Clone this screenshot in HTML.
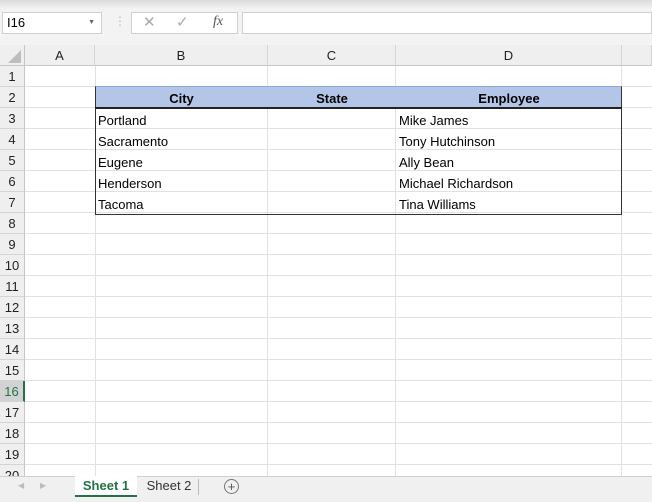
<!DOCTYPE html>
<html><head><style>
*{margin:0;padding:0;box-sizing:border-box}
body{width:652px;height:502px;overflow:hidden;background:#fff;font-family:"Liberation Sans",sans-serif;position:relative;font-size:13px;color:#000}
.a{position:absolute}
.vl{position:absolute;top:66px;height:410px;width:1px;background:#e1e1e1}
.hl{position:absolute;left:25px;width:627px;height:1px;background:#e1e1e1}
.rh{position:absolute;left:0;width:25px;height:21px;background:#efefef;border-bottom:1px solid #d4d4d4;border-right:1px solid #c6c6c6;text-align:center;line-height:21px;font-size:13px;color:#222}
.ch{position:absolute;top:45px;height:21px;background:#efefef;border-right:1px solid #d4d4d4;border-bottom:1px solid #c6c6c6;text-align:center;line-height:21px;color:#222}
.t{position:absolute;line-height:21px;font-size:13px}
</style></head><body>
<div class="a" style="left:0;top:0;width:652px;height:45px;background:#f3f3f3"></div>
<div class="a" style="left:0;top:0;width:652px;height:8px;background:linear-gradient(#dcdcdc,#f0f0f0)"></div>
<div class="a" style="left:2px;top:12px;width:100px;height:22px;background:#fff;border:1px solid #d0d0d0;font-size:13px;line-height:20px;padding-left:4px">I16<span style="position:absolute;right:6px;top:0;font-size:7px;color:#666">▼</span></div>
<div class="a" style="left:114px;top:14px;color:#bbb;font-size:12px">⋮</div>
<div class="a" style="left:131px;top:12px;width:107px;height:22px;background:#fff;border:1px solid #d0d0d0"></div>
<div class="a" style="left:143px;top:13px;color:#aaa;font-size:15px">✕</div>
<div class="a" style="left:176px;top:13px;color:#aaa;font-size:15px">✓</div>
<div class="a" style="left:213px;top:14px;color:#555;font-family:'Liberation Serif',serif;font-style:italic;font-size:14px">fx</div>
<div class="a" style="left:242px;top:12px;width:410px;height:22px;background:#fff;border:1px solid #d0d0d0"></div>
<div class="a" style="left:0;top:45px;width:25px;height:21px;background:#efefef;border-right:1px solid #c6c6c6;border-bottom:1px solid #c6c6c6"></div>
<div class="a" style="left:8px;top:50px;width:0;height:0;border-left:13px solid transparent;border-bottom:13px solid #bdbdbd"></div>
<div class="ch" style="left:25px;width:70px">A</div>
<div class="ch" style="left:95px;width:173px">B</div>
<div class="ch" style="left:268px;width:128px">C</div>
<div class="ch" style="left:396px;width:226px">D</div>
<div class="ch" style="left:622px;width:30px"></div>
<div class="vl" style="left:95px"></div><div class="vl" style="left:267px"></div><div class="vl" style="left:395px"></div><div class="vl" style="left:621px"></div>
<div id="rows"></div>
<div class="a" style="left:96px;top:87px;width:526px;height:21px;background:#b4c6e7"></div>
<div class="a" style="left:95px;top:86px;width:527px;height:129px;border:1px solid #333;border-top:1px solid #8ea9db"></div>
<div class="a" style="left:95px;top:107px;width:527px;height:2px;background:#222"></div>
<div class="t" style="left:95px;top:88px;width:173px;text-align:center;font-weight:bold">City</div>
<div class="t" style="left:268px;top:88px;width:128px;text-align:center;font-weight:bold">State</div>
<div class="t" style="left:396px;top:88px;width:226px;text-align:center;font-weight:bold">Employee</div>
<div class="t" style="left:98px;top:110px">Portland</div><div class="t" style="left:399px;top:110px">Mike James</div>
<div class="t" style="left:98px;top:131px">Sacramento</div><div class="t" style="left:399px;top:131px">Tony Hutchinson</div>
<div class="t" style="left:98px;top:152px">Eugene</div><div class="t" style="left:399px;top:152px">Ally Bean</div>
<div class="t" style="left:98px;top:173px">Henderson</div><div class="t" style="left:399px;top:173px">Michael Richardson</div>
<div class="t" style="left:98px;top:194px">Tacoma</div><div class="t" style="left:399px;top:194px">Tina Williams</div>
<div class="a" style="left:0;top:476px;width:652px;height:26px;background:#f0f0f0;border-top:1px solid #d0d0d0"></div>
<div class="a" style="left:18px;top:481px;color:#bbb;font-size:8px">◀</div>
<div class="a" style="left:40px;top:481px;color:#bbb;font-size:8px">▶</div>
<div class="a" style="left:75px;top:476px;width:62px;height:21px;background:#fff;border-bottom:2px solid #217346;color:#217346;font-weight:bold;text-align:center;line-height:20px">Sheet 1</div>
<div class="a" style="left:139px;top:476px;width:60px;height:21px;text-align:center;line-height:20px;color:#333">Sheet 2</div>
<div class="a" style="left:198px;top:479px;width:1px;height:16px;background:#bbb"></div>
<div class="a" style="left:224px;top:479px;width:15px;height:15px;border:1px solid #777;border-radius:50%;text-align:center;line-height:13px;font-size:13px;color:#555">+</div>
<script>
var h='';for(var n=1;n<=20;n++){var y=66+(n-1)*21;var s=n==16?'background:#d2d2d2;color:#217346;border-right:2px solid #217346;':'';h+='<div class="rh" style="top:'+y+'px;'+s+'">'+n+'</div><div class="hl" style="top:'+(y+20)+'px"></div>';}
document.getElementById('rows').innerHTML=h;
</script>
</body></html>
